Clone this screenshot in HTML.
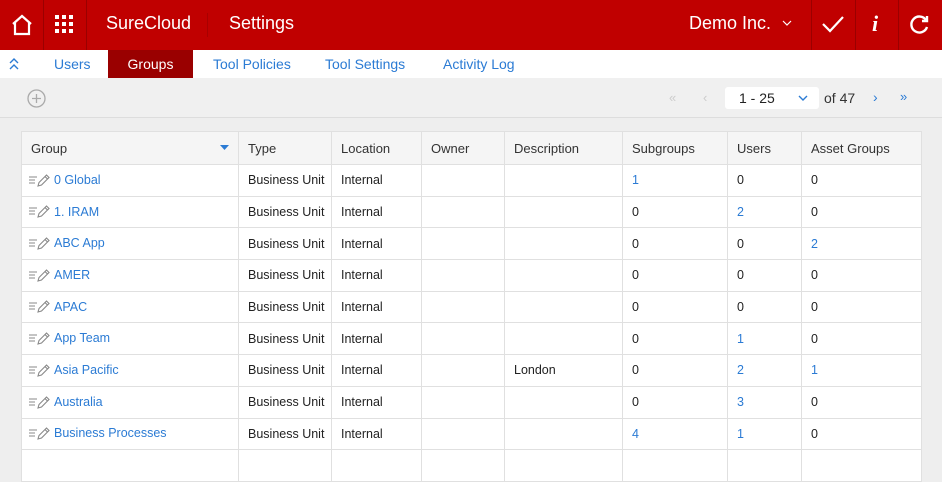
<!DOCTYPE html><html><head><style>
*{box-sizing:border-box;margin:0;padding:0}
body{width:942px;height:453px;overflow:hidden;background:#eeeeee;font-family:"Liberation Sans",sans-serif;position:relative}
.hdr{position:absolute;left:0;top:0;width:942px;height:50px;background:#c00000;color:#fff}
.hdr .d{position:absolute;top:0;width:1px;height:50px;background:#9a0000}
.hdr .t{position:absolute;top:13px;font-size:18px}
.nav{position:absolute;top:50px;left:0;width:942px;height:28px;background:#fff;font-size:14px;color:#2b7bd4}
.nav span{position:absolute;top:6px}
.tab{position:absolute;left:108px;top:0;width:85px;height:28px;background:#9a0000;color:#fff;text-align:center;padding-top:6px}
.tb{position:absolute;top:78px;left:0;width:942px;height:40px;background:#f0f0f0;border-bottom:1px solid #ddd}
table{position:absolute;left:21px;top:131px;border-collapse:collapse;font-size:12.5px;background:#fff;width:900px;table-layout:fixed}
td,th{border:1px solid #e0e0e0;height:31.7px;padding:0 9px;text-align:left;font-weight:normal;color:#222;white-space:nowrap;overflow:hidden}
th{background:#f5f5f5;height:33px;color:#333;font-size:13px}
.l{color:#2b7bd4}
.ic{display:inline-block;vertical-align:middle;margin-right:4px;margin-left:-3px;position:relative;top:-1px}
</style></head><body>
<div class="hdr">
<svg style="position:absolute;left:10px;top:13px" width="24" height="24" viewBox="0 0 24 24" fill="none" stroke="#fff" stroke-width="2.2"><path d="M3 11 L12 3 L21 11 M5 9.5 V21 H19 V9.5"/></svg>
<div class="d" style="left:43px"></div>
<svg style="position:absolute;left:54px;top:14px" width="20" height="20" viewBox="0 0 20 20" fill="#fff"><rect x="1" y="1" width="4" height="4"/><rect x="8" y="1" width="4" height="4"/><rect x="15" y="1" width="4" height="4"/><rect x="1" y="8" width="4" height="4"/><rect x="8" y="8" width="4" height="4"/><rect x="15" y="8" width="4" height="4"/><rect x="1" y="15" width="4" height="4"/><rect x="8" y="15" width="4" height="4"/><rect x="15" y="15" width="4" height="4"/></svg>
<div class="d" style="left:86px"></div>
<div class="t" style="left:106px">SureCloud</div>
<div class="d" style="left:207px;top:13px;height:24px;background:#a80000"></div>
<div class="t" style="left:229px">Settings</div>
<div class="t" style="left:689px">Demo Inc.</div>
<svg style="position:absolute;left:782px;top:20px" width="10" height="7" viewBox="0 0 10 7" fill="none" stroke="#fff" stroke-width="1.2"><path d="M1 1 L5 5 L9 1"/></svg>
<div class="d" style="left:811px"></div>
<svg style="position:absolute;left:822px;top:15px" width="22" height="18" viewBox="0 0 22 18" fill="none" stroke="#fff" stroke-width="2.2"><path d="M1 9 L8 16 L21 2"/></svg>
<div class="d" style="left:855px"></div>
<div style="position:absolute;left:872px;top:11px;font:italic bold 22px 'Liberation Serif',serif">i</div>
<div class="d" style="left:898px"></div>
<svg style="position:absolute;left:908px;top:14px" width="22" height="22" viewBox="0 0 22 22" fill="none" stroke="#fff" stroke-width="2.4"><path d="M18 6 A8 8 0 1 0 19 13"/><path d="M19 2 V7 H14" fill="none"/></svg>
</div>
<div class="nav">
<svg style="position:absolute;left:9px;top:8px" width="10" height="12" viewBox="0 0 10 12" fill="none" stroke="#2b7bd4" stroke-width="1.4"><path d="M1 5 L5 1 L9 5 M1 11 L5 7 L9 11"/></svg>
<span style="left:54px">Users</span>
<div class="tab">Groups</div>
<span style="left:213px">Tool Policies</span>
<span style="left:325px">Tool Settings</span>
<span style="left:443px">Activity Log</span>
</div>
<div class="tb">
<svg style="position:absolute;left:27px;top:11px" width="19" height="19" viewBox="0 0 19 19" fill="none" stroke="#aaa" stroke-width="1.3"><circle cx="9.5" cy="9.5" r="8.5"/><path d="M9.5 5 V14 M5 9.5 H14"/></svg>
<span style="position:absolute;left:669px;top:12px;color:#ccc;font-size:13px">«</span>
<span style="position:absolute;left:703px;top:12px;color:#ccc;font-size:13px">‹</span>
<div style="position:absolute;left:725px;top:9px;width:94px;height:22px;background:#fff;border-radius:3px;font-size:14px;padding:3px 0 0 14px;color:#222">1 - 25</div>
<svg style="position:absolute;left:798px;top:17px" width="10" height="7" viewBox="0 0 10 7" fill="none" stroke="#2b7bd4" stroke-width="1.4"><path d="M1 1 L5 5 L9 1"/></svg>
<span style="position:absolute;left:824px;top:12px;font-size:14px;color:#333">of 47</span>
<span style="position:absolute;left:873px;top:11px;color:#2b7bd4;font-size:14px">›</span>
<span style="position:absolute;left:900px;top:11px;color:#2b7bd4;font-size:13px">»</span>
</div>
<table>
<colgroup><col style="width:217px"><col style="width:93px"><col style="width:90px"><col style="width:83px"><col style="width:118px"><col style="width:105px"><col style="width:74px"><col style="width:120px"></colgroup>
<tr><th>Group<svg style="float:right;margin-top:4px" width="9" height="5" viewBox="0 0 9 5"><path d="M0 0 H9 L4.5 5Z" fill="#2b7bd4"/></svg></th><th>Type</th><th>Location</th><th>Owner</th><th>Description</th><th>Subgroups</th><th>Users</th><th>Asset Groups</th></tr>
<tr><td><svg class="ic" width="22" height="14" viewBox="0 0 22 14" fill="none" stroke="#888" stroke-width="1.1"><path d="M1 4 H9 M1 7 H7 M1 10 H7 M10 13 L11 9.5 L18.5 2 L21 4.5 L13.5 12 Z M17 3.5 L19.5 6"/></svg><span class="l">0 Global</span></td><td>Business Unit</td><td>Internal</td><td></td><td></td><td class="l">1</td><td>0</td><td>0</td></tr>
<tr><td><svg class="ic" width="22" height="14" viewBox="0 0 22 14" fill="none" stroke="#888" stroke-width="1.1"><path d="M1 4 H9 M1 7 H7 M1 10 H7 M10 13 L11 9.5 L18.5 2 L21 4.5 L13.5 12 Z M17 3.5 L19.5 6"/></svg><span class="l">1. IRAM</span></td><td>Business Unit</td><td>Internal</td><td></td><td></td><td>0</td><td class="l">2</td><td>0</td></tr>
<tr><td><svg class="ic" width="22" height="14" viewBox="0 0 22 14" fill="none" stroke="#888" stroke-width="1.1"><path d="M1 4 H9 M1 7 H7 M1 10 H7 M10 13 L11 9.5 L18.5 2 L21 4.5 L13.5 12 Z M17 3.5 L19.5 6"/></svg><span class="l">ABC App</span></td><td>Business Unit</td><td>Internal</td><td></td><td></td><td>0</td><td>0</td><td class="l">2</td></tr>
<tr><td><svg class="ic" width="22" height="14" viewBox="0 0 22 14" fill="none" stroke="#888" stroke-width="1.1"><path d="M1 4 H9 M1 7 H7 M1 10 H7 M10 13 L11 9.5 L18.5 2 L21 4.5 L13.5 12 Z M17 3.5 L19.5 6"/></svg><span class="l">AMER</span></td><td>Business Unit</td><td>Internal</td><td></td><td></td><td>0</td><td>0</td><td>0</td></tr>
<tr><td><svg class="ic" width="22" height="14" viewBox="0 0 22 14" fill="none" stroke="#888" stroke-width="1.1"><path d="M1 4 H9 M1 7 H7 M1 10 H7 M10 13 L11 9.5 L18.5 2 L21 4.5 L13.5 12 Z M17 3.5 L19.5 6"/></svg><span class="l">APAC</span></td><td>Business Unit</td><td>Internal</td><td></td><td></td><td>0</td><td>0</td><td>0</td></tr>
<tr><td><svg class="ic" width="22" height="14" viewBox="0 0 22 14" fill="none" stroke="#888" stroke-width="1.1"><path d="M1 4 H9 M1 7 H7 M1 10 H7 M10 13 L11 9.5 L18.5 2 L21 4.5 L13.5 12 Z M17 3.5 L19.5 6"/></svg><span class="l">App Team</span></td><td>Business Unit</td><td>Internal</td><td></td><td></td><td>0</td><td class="l">1</td><td>0</td></tr>
<tr><td><svg class="ic" width="22" height="14" viewBox="0 0 22 14" fill="none" stroke="#888" stroke-width="1.1"><path d="M1 4 H9 M1 7 H7 M1 10 H7 M10 13 L11 9.5 L18.5 2 L21 4.5 L13.5 12 Z M17 3.5 L19.5 6"/></svg><span class="l">Asia Pacific</span></td><td>Business Unit</td><td>Internal</td><td></td><td>London</td><td>0</td><td class="l">2</td><td class="l">1</td></tr>
<tr><td><svg class="ic" width="22" height="14" viewBox="0 0 22 14" fill="none" stroke="#888" stroke-width="1.1"><path d="M1 4 H9 M1 7 H7 M1 10 H7 M10 13 L11 9.5 L18.5 2 L21 4.5 L13.5 12 Z M17 3.5 L19.5 6"/></svg><span class="l">Australia</span></td><td>Business Unit</td><td>Internal</td><td></td><td></td><td>0</td><td class="l">3</td><td>0</td></tr>
<tr><td><svg class="ic" width="22" height="14" viewBox="0 0 22 14" fill="none" stroke="#888" stroke-width="1.1"><path d="M1 4 H9 M1 7 H7 M1 10 H7 M10 13 L11 9.5 L18.5 2 L21 4.5 L13.5 12 Z M17 3.5 L19.5 6"/></svg><span class="l">Business Processes</span></td><td>Business Unit</td><td>Internal</td><td></td><td></td><td class="l">4</td><td class="l">1</td><td>0</td></tr>
<tr><td></td><td></td><td></td><td></td><td></td><td></td><td></td><td></td></tr>
</table>
</body></html>
